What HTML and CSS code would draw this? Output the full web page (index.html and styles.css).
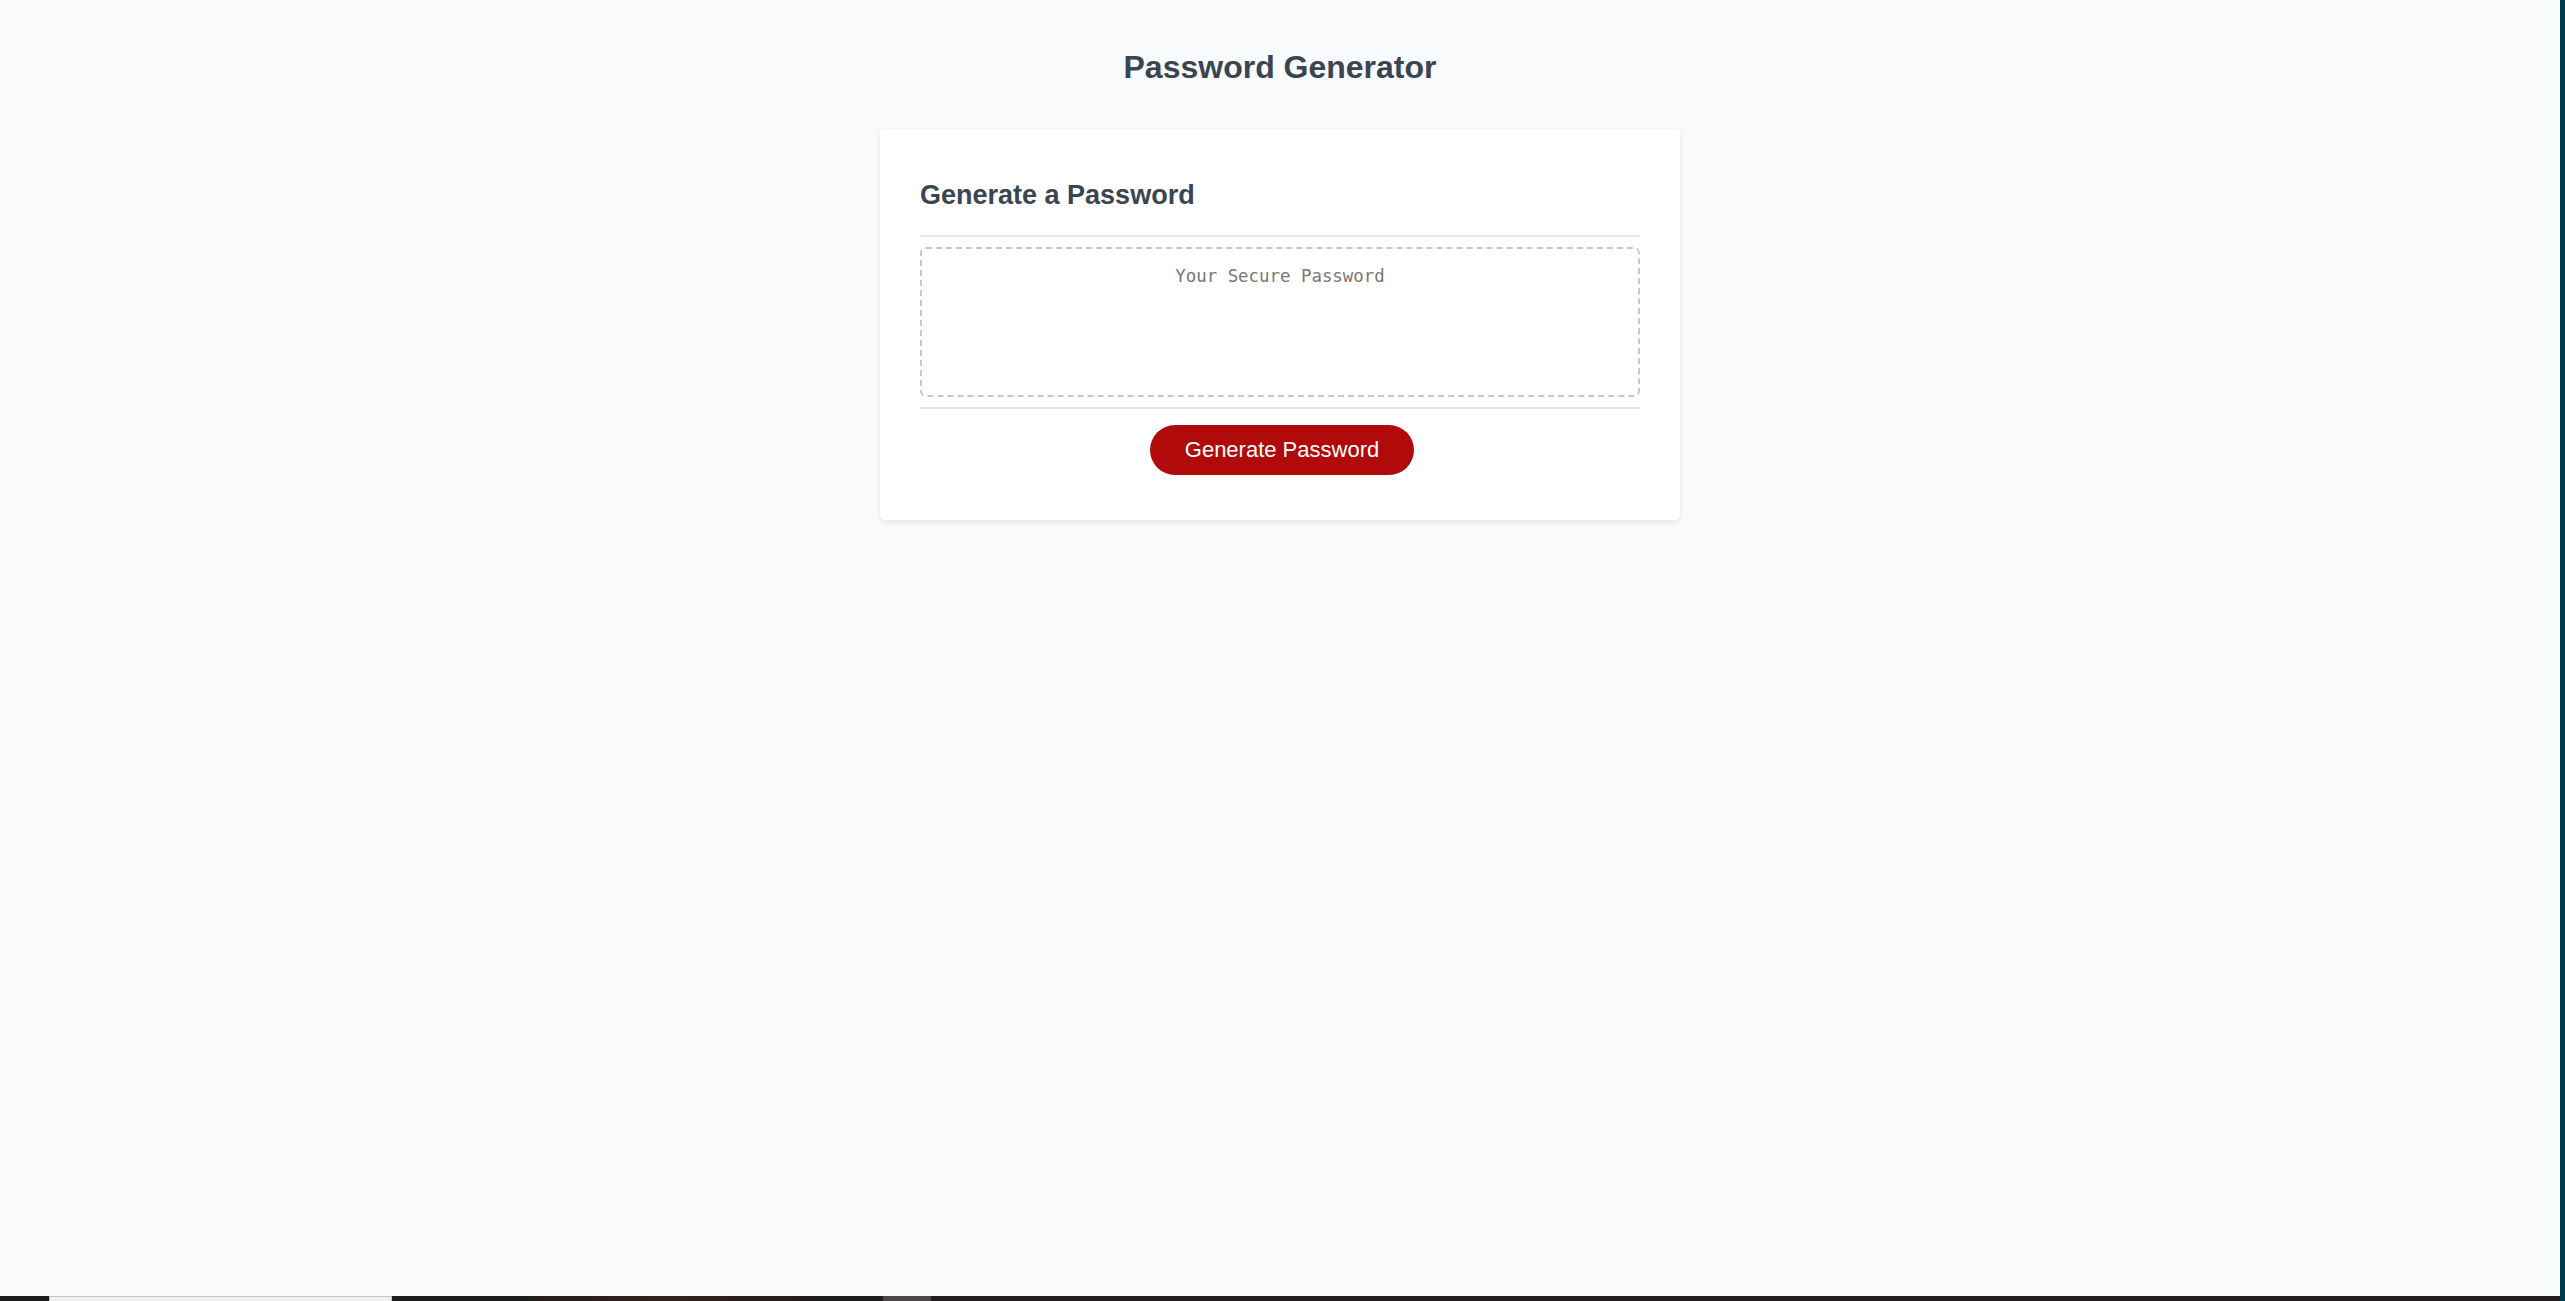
FILE: index.html
```html
<!DOCTYPE html>
<html lang="en">
<head>
<meta charset="utf-8">
<title>Password Generator</title>
<link rel="stylesheet" href="styles.css">
</head>
<body>
<div class="screen">
  <main class="page">
    <h1 class="title">Password Generator</h1>
    <section class="card">
      <header class="card-header">
        <h2 class="card-title">Generate a Password</h2>
      </header>
      <div class="card-body">
        <textarea class="password" readonly placeholder="Your Secure Password" aria-label="Generated Password"></textarea>
      </div>
      <footer class="card-footer">
        <button class="btn" type="button">Generate Password</button>
      </footer>
    </section>
  </main>
  <div class="edge-right"></div>
  <div class="edge-bottom">
    <span class="seg seg-a"></span>
    <span class="seg seg-light"></span>
    <span class="seg seg-b"></span>
    <span class="seg seg-brown"></span>
    <span class="seg seg-c"></span>
    <span class="seg seg-gray"></span>
    <span class="seg seg-rest"></span>
  </div>
</div>
</body>
</html>
```

FILE: styles.css
```css
html, body {
  margin: 0;
  padding: 0;
  height: 100%;
}

body {
  background: #f9fafc;
  font-family: "Liberation Sans", Arial, sans-serif;
  color: #3a4551;
}

.screen {
  display: grid;
  grid-template-columns: 1fr 5px;
  grid-template-rows: 1fr 5px;
  height: 100vh;
  overflow: hidden;
}

.page {
  grid-column: 1;
  grid-row: 1;
  display: flex;
  flex-direction: column;
  align-items: center;
  padding-top: 49px;
  min-height: 0;
}

.title {
  margin: 0;
  font-size: 32px;
  line-height: 37px;
  font-weight: 700;
  color: #3a4551;
}

.card {
  margin-top: 43px;
  width: 800px;
  box-sizing: border-box;
  padding: 51px 40px 45px;
  background: #ffffff;
  border-radius: 5px;
  box-shadow: 0 2px 6px rgba(0, 0, 0, 0.09);
}

.card-header {
  padding-bottom: 24px;
  border-bottom: 2px solid #e7e7e7;
}

.card-title {
  margin: 0;
  font-size: 27px;
  line-height: 31px;
  font-weight: 700;
  color: #3a4551;
}

.card-body {
  padding: 10px 0;
}

.password {
  display: block;
  width: 100%;
  height: 150px;
  box-sizing: border-box;
  margin: 0;
  padding: 17px 12px;
  border: 2px dashed #c4c8cf;
  border-radius: 6px;
  resize: none;
  outline: none;
  background: #ffffff;
  font-family: "DejaVu Sans Mono", "Liberation Mono", monospace;
  font-size: 17.4px;
  line-height: 20px;
  text-align: center;
  color: #444;
}

.password::placeholder {
  color: #777777;
  opacity: 1;
}

.card-footer {
  border-top: 2px solid #e7e7e7;
  padding-top: 16px;
  display: flex;
  justify-content: center;
}

.btn {
  height: 50px;
  padding: 0 35px 2px;
  margin-left: 4px;
  border: none;
  border-radius: 25px;
  background: #b00a0a;
  color: #ffffff;
  font-family: "Liberation Sans", Arial, sans-serif;
  font-size: 22px;
  line-height: 25px;
  cursor: pointer;
}

.edge-right {
  grid-column: 2;
  grid-row: 1 / span 2;
  background: #023a4a;
}

.edge-bottom {
  grid-column: 1;
  grid-row: 2;
  display: flex;
  background: #1f1c1c;
}

.seg {
  display: block;
  height: 100%;
}

.seg-a { width: 49px; background: #1c1b1b; }
.seg-light {
  width: 343px;
  box-sizing: border-box;
  background: #f0f0f0;
  border-top: 1px solid #c4c4c4;
  border-left: 1px solid #c4c4c4;
  border-right: 1px solid #c4c4c4;
}
.seg-b { width: 140px; background: #1e1d1d; }
.seg-brown { width: 270px; background: linear-gradient(90deg, #241c1b, #33211d 50%, #241c1b); }
.seg-c { width: 81px; background: #1f1c1c; }
.seg-gray { width: 48px; background: #4b4747; }
.seg-rest { flex: 1; background: #221d1c; }
```
